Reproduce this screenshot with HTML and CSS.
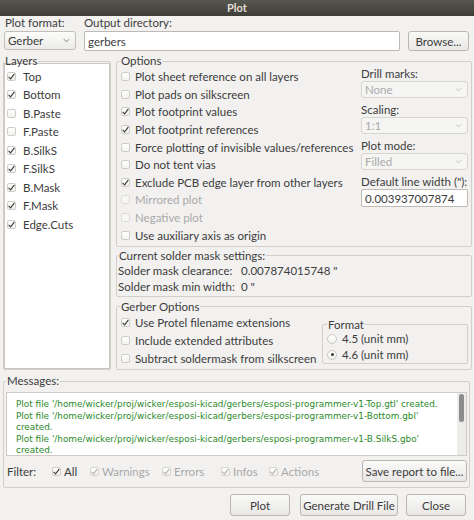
FILE: index.html
```html
<!DOCTYPE html>
<html>
<head>
<meta charset="utf-8">
<title>Plot</title>
<link rel="stylesheet" href="styles.css">
</head>
<body>
<div class="titlebar">Plot</div>

<div class="top">
  <div class="lbl first">Plot format:</div>
  <div class="lbl">Output directory:</div>
  <div></div>
  <div class="combo"><span>Gerber</span><svg class="chev" viewBox="0 0 8 5"><path d="M1 1 4 4 7 1"/></svg></div>
  <div class="entry">gerbers</div>
  <div class="btn">Browse...</div>
</div>

<div class="main">
  <fieldset class="group layers">
    <legend>Layers</legend>
    <div class="list">
      <div class="litem"><span class="cb"><svg viewBox="0 0 9 9"><path d="M1.6 4.8 3.6 6.8 7.4 1.8"/></svg></span>Top</div>
      <div class="litem"><span class="cb"><svg viewBox="0 0 9 9"><path d="M1.6 4.8 3.6 6.8 7.4 1.8"/></svg></span>Bottom</div>
      <div class="litem"><span class="cb"></span>B.Paste</div>
      <div class="litem"><span class="cb"></span>F.Paste</div>
      <div class="litem"><span class="cb"><svg viewBox="0 0 9 9"><path d="M1.6 4.8 3.6 6.8 7.4 1.8"/></svg></span>B.SilkS</div>
      <div class="litem"><span class="cb"><svg viewBox="0 0 9 9"><path d="M1.6 4.8 3.6 6.8 7.4 1.8"/></svg></span>F.SilkS</div>
      <div class="litem"><span class="cb"><svg viewBox="0 0 9 9"><path d="M1.6 4.8 3.6 6.8 7.4 1.8"/></svg></span>B.Mask</div>
      <div class="litem"><span class="cb"><svg viewBox="0 0 9 9"><path d="M1.6 4.8 3.6 6.8 7.4 1.8"/></svg></span>F.Mask</div>
      <div class="litem"><span class="cb"><svg viewBox="0 0 9 9"><path d="M1.6 4.8 3.6 6.8 7.4 1.8"/></svg></span>Edge.Cuts</div>
    </div>
  </fieldset>

  <div class="rightcol">
    <fieldset class="group options">
      <legend>Options</legend>
      <div class="optbody">
        <div class="optleft">
          <div class="item"><span class="cb"></span>Plot sheet reference on all layers</div>
          <div class="item"><span class="cb"></span>Plot pads on silkscreen</div>
          <div class="item"><span class="cb"><svg viewBox="0 0 9 9"><path d="M1.6 4.8 3.6 6.8 7.4 1.8"/></svg></span>Plot footprint values</div>
          <div class="item"><span class="cb"><svg viewBox="0 0 9 9"><path d="M1.6 4.8 3.6 6.8 7.4 1.8"/></svg></span>Plot footprint references</div>
          <div class="item"><span class="cb"></span>Force plotting of invisible values/references</div>
          <div class="item"><span class="cb"></span>Do not tent vias</div>
          <div class="item"><span class="cb"><svg viewBox="0 0 9 9"><path d="M1.6 4.8 3.6 6.8 7.4 1.8"/></svg></span>Exclude PCB edge layer from other layers</div>
          <div class="item dis"><span class="cb"></span>Mirrored plot</div>
          <div class="item dis"><span class="cb"></span>Negative plot</div>
          <div class="item"><span class="cb"></span>Use auxiliary axis as origin</div>
        </div>
        <div class="optright">
          <div class="rlbl">Drill marks:</div>
          <div class="combo small dis"><span>None</span><svg class="chev" viewBox="0 0 8 5"><path d="M1 1 4 4 7 1"/></svg></div>
          <div class="rlbl">Scaling:</div>
          <div class="combo small dis"><span>1:1</span><svg class="chev" viewBox="0 0 8 5"><path d="M1 1 4 4 7 1"/></svg></div>
          <div class="rlbl">Plot mode:</div>
          <div class="combo small dis"><span>Filled</span><svg class="chev" viewBox="0 0 8 5"><path d="M1 1 4 4 7 1"/></svg></div>
          <div class="rlbl">Default line width ("):</div>
          <div class="entry small">0.003937007874</div>
        </div>
      </div>
    </fieldset>

    <fieldset class="group solder">
      <legend>Current solder mask settings:</legend>
      <div class="srow"><span>Solder mask clearance:</span><span>0.007874015748 "</span></div>
      <div class="srow"><span>Solder mask min width:</span><span>0 "</span></div>
    </fieldset>

    <fieldset class="group gerber">
      <legend>Gerber Options</legend>
      <div class="gbody">
        <div class="gleft">
          <div class="item g"><span class="cb"><svg viewBox="0 0 9 9"><path d="M1.6 4.8 3.6 6.8 7.4 1.8"/></svg></span>Use Protel filename extensions</div>
          <div class="item g"><span class="cb"></span>Include extended attributes</div>
          <div class="item g"><span class="cb"></span>Subtract soldermask from silkscreen</div>
        </div>
        <fieldset class="group format">
          <legend>Format</legend>
          <div class="ritem first"><span class="rb"></span>4.5 (unit mm)</div>
          <div class="ritem"><span class="rb on"></span>4.6 (unit mm)</div>
        </fieldset>
      </div>
    </fieldset>
  </div>
</div>

<fieldset class="group messages">
  <legend>Messages:</legend>
  <div class="msgbox">
    <div class="msgtext">
      <div>Plot file '/home/wicker/proj/wicker/esposi-kicad/gerbers/esposi-programmer-v1-Top.gtl' created.</div>
      <div>Plot file '/home/wicker/proj/wicker/esposi-kicad/gerbers/esposi-programmer-v1-Bottom.gbl'</div>
      <div>created.</div>
      <div>Plot file '/home/wicker/proj/wicker/esposi-kicad/gerbers/esposi-programmer-v1-B.SilkS.gbo'</div>
      <div>created.</div>
    </div>
    <div class="scroll"><div class="thumb"></div></div>
  </div>
  <div class="filter">
    <span class="flabel">Filter:</span>
    <span class="fitem w-all"><span class="cb"><svg viewBox="0 0 9 9"><path d="M1.6 4.8 3.6 6.8 7.4 1.8"/></svg></span>All</span>
    <span class="fitem dis w-warn"><span class="cb"><svg viewBox="0 0 9 9"><path d="M1.6 4.8 3.6 6.8 7.4 1.8"/></svg></span>Warnings</span>
    <span class="fitem dis w-err"><span class="cb"><svg viewBox="0 0 9 9"><path d="M1.6 4.8 3.6 6.8 7.4 1.8"/></svg></span>Errors</span>
    <span class="fitem dis w-info"><span class="cb"><svg viewBox="0 0 9 9"><path d="M1.6 4.8 3.6 6.8 7.4 1.8"/></svg></span>Infos</span>
    <span class="fitem dis"><span class="cb"><svg viewBox="0 0 9 9"><path d="M1.6 4.8 3.6 6.8 7.4 1.8"/></svg></span>Actions</span>
    <span class="btn save">Save report to file...</span>
  </div>
</fieldset>

<div class="bottom">
  <span class="btn b-plot">Plot</span>
  <span class="btn b-drill">Generate Drill File</span>
  <span class="btn b-close">Close</span>
</div>
</body>
</html>
```

FILE: styles.css
```css
* { box-sizing: border-box; }
html, body { margin: 0; padding: 0; }
body {
  width: 474px;
  height: 520px;
  overflow: hidden;
  background: #f2f1f0;
  font-family: Lato, "Noto Sans", sans-serif;
  font-size: 11.5px;
  color: #3c3c3c;
}

.titlebar {
  height: 16px;
  line-height: 16px;
  background: linear-gradient(#57564f, #3e3d38);
  color: #e2ded6;
  font-weight: bold;
  font-size: 11px;
  text-align: center;
}

/* top row */
.top {
  display: grid;
  grid-template-columns: 72px 1fr 61px;
  grid-template-rows: 14px 20px;
  column-gap: 8px;
  row-gap: 1px;
  padding: 0 5px 0 4px;
}
.lbl { line-height: 14px; white-space: nowrap; }
.lbl.first { padding-left: 1px; }

.combo {
  display: flex;
  align-items: center;
  justify-content: space-between;
  border: 1px solid #c2bfba;
  border-radius: 3px;
  background: linear-gradient(#fcfcfb, #ecebe9);
  padding: 0 5px 0 3px;
  height: 19px;
}
.chev { width: 7px; height: 5px; fill: none; stroke: #7a7a7a; stroke-width: 1.1; }
.combo.small { height: 17px; }
.combo.dis { background: #f5f5f4; border-color: #d8d5d0; color: #aaaaaa; }
.combo.dis .chev { stroke: #bdbdbd; }

.entry {
  background: #fff;
  border: 1px solid #bdbab5;
  border-radius: 2px;
  padding: 0 3px;
  display: flex;
  align-items: center;
}
.entry.small { height: 18px; }

.btn {
  display: flex;
  align-items: center;
  justify-content: center;
  border: 1px solid #bab7b2;
  border-radius: 3px;
  background: linear-gradient(#f9f9f8, #e9e8e6);
  white-space: nowrap;
}

/* group frames */
.group {
  margin: 0;
  padding: 0;
  border: 1px solid #d2cfca;
  border-radius: 2px;
  min-width: 0;
}
.group > legend {
  padding: 0 1px;
  line-height: 14px;
  white-space: nowrap;
}

.main {
  display: grid;
  grid-template-columns: 108px 356px;
  column-gap: 5px;
  padding-left: 3px;
  margin-top: 3px;
}

/* layers */
.list {
  margin-top: -5px;
  height: 306px;
  background: #fff;
  border: 1px solid #cbc8c3;
  padding-top: 3px;
}
.litem {
  height: 18.5px;
  display: flex;
  align-items: center;
  padding-left: 2px;
  gap: 7px;
  white-space: nowrap;
}

.cb {
  width: 9px;
  height: 9px;
  flex: none;
  border: 1px solid #d0cdc8;
  border-radius: 2px;
  background: linear-gradient(#ffffff, #f2f1f0);
}
.cb svg {
  display: block;
  width: 9px;
  height: 9px;
  margin: -1px;
  overflow: visible;
  fill: none;
  stroke: #3c3c3c;
  stroke-width: 1.1;
}

/* options */
.rightcol { display: flex; flex-direction: column; }
.options { padding: 0 3px 2px 3px; }
.optbody { display: flex; }
.optleft { flex: 1; }
.item {
  height: 17.6px;
  display: flex;
  align-items: center;
  gap: 5px;
  padding-left: 1px;
  white-space: nowrap;
}
.item.dis { color: #a9a9a9; }
.item.dis .cb { border-color: #dedbd7; background: #f6f6f5; }
.item.g { height: 18px; }

.optright {
  width: 107px;
  margin-top: -2px;
  display: flex;
  flex-direction: column;
}
.rlbl { height: 15px; line-height: 15px; white-space: nowrap; }
.optright .combo + .rlbl { margin-top: 4px; }

/* solder */
.solder { margin-top: 2px; padding: 0 0 1px 1px; }
.srow {
  height: 16px;
  display: grid;
  grid-template-columns: 123px 1fr;
  align-items: center;
  white-space: nowrap;
}

/* gerber */
.gerber { margin-top: 3px; padding: 0 3px 1px 3px; }
.gbody { display: flex; align-items: flex-start; }
.gleft { flex: 1; }
.format {
  width: 146px;
  margin-top: 4px;
  padding: 0 0 0 4px;
}
.ritem {
  height: 16px;
  display: flex;
  align-items: center;
  gap: 5px;
  white-space: nowrap;
}
.ritem.first { margin-top: -1px; }
.rb {
  width: 10px;
  height: 10px;
  flex: none;
  border-radius: 50%;
  border: 1px solid #cbc8c3;
  background: linear-gradient(#ffffff, #f0efee);
  display: flex;
  align-items: center;
  justify-content: center;
}
.rb.on::after {
  content: "";
  width: 3px;
  height: 3px;
  border-radius: 50%;
  background: #3a3a3a;
}

/* messages */
.messages {
  margin: 4px 0 0 3px;
  width: 467px;
  padding: 0 2px 5px 2px;
}
.msgbox {
  margin-top: 4px;
  height: 64px;
  display: flex;
  background: #fff;
  border: 1px solid #cfccc7;
}
.msgtext {
  flex: 1;
  padding: 6px 0 0 9px;
  font-family: "DejaVu Sans", sans-serif;
  font-size: 8.9px;
  line-height: 11.5px;
  color: #2a8a2a;
  white-space: nowrap;
  overflow: hidden;
}
.scroll {
  width: 9px;
  flex: none;
  background: #ececeb;
  padding: 1px 2px;
}
.thumb {
  height: 28px;
  border-radius: 3px;
  background: #8c8c8c;
}

.filter {
  margin-top: 4px;
  height: 22px;
  display: flex;
  align-items: center;
}
.flabel { width: 46px; padding-left: 1px; }
.fitem {
  display: flex;
  align-items: center;
  gap: 3px;
  white-space: nowrap;
}
.fitem.dis { color: #a9a9a9; }
.fitem.dis .cb { border-color: #d8d5d0; }
.fitem.dis .cb svg { stroke: #b3b3b3; }
.w-all { width: 38px; }
.w-warn { width: 72px; }
.w-err { width: 59px; }
.w-info { width: 48px; }
.save {
  margin-left: auto;
  width: 105px;
  height: 22px;
}

/* bottom */
.bottom {
  display: flex;
  justify-content: flex-end;
  margin-top: 6px;
  padding-right: 8px;
}
.bottom .btn { height: 22px; }
.b-plot { width: 60px; margin-right: 10px; }
.b-drill { width: 98px; margin-right: 8px; }
.b-close { width: 60px; }
```
